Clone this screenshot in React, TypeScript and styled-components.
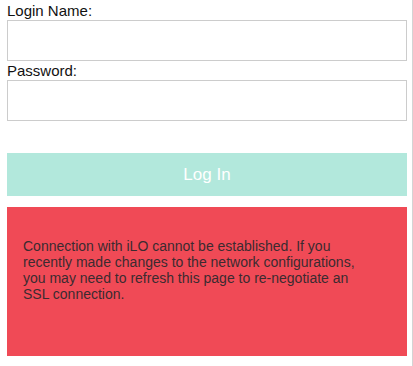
import styled, { createGlobalStyle } from 'styled-components';

const GlobalStyle = createGlobalStyle`
  html, body {
    margin: 0;
    padding: 0;
    background: #ffffff;
  }
  body {
    font-family: "Liberation Sans", Arial, sans-serif;
  }
`;

const Page = styled.div`
  width: 400px;
  min-height: 366px;
  padding: 0 5px 0 7px;
  border-right: 1px solid #d4d4d4;
`;

const Form = styled.form`
  display: flex;
  flex-direction: column;
  padding-top: 1px;
`;

const Label = styled.label`
  display: block;
  font-size: 15px;
  line-height: 19px;
  color: #111;
`;

const Input = styled.input`
  box-sizing: border-box;
  width: 400px;
  height: 41px;
  margin: 0;
  border: 1px solid #cccccc;
  background: #fff;
  outline: none;
`;

const Button = styled.button`
  margin-top: 32px;
  width: 400px;
  height: 43px;
  border: none;
  background: #b2e8dc;
  color: #ffffff;
  font-family: "Liberation Sans", Arial, sans-serif;
  font-size: 17px;
  cursor: pointer;
`;

const ErrorBox = styled.div`
  box-sizing: border-box;
  margin-top: 11px;
  width: 400px;
  height: 149px;
  padding: 31px 40px 0 16px;
  background: #f04a56;
  color: #3b2b30;
  font-size: 14px;
  line-height: 16px;
`;

export default function App() {
  return (
    <>
      <GlobalStyle />
      <Page>
        <Form onSubmit={e => e.preventDefault()}>
          <Label htmlFor="login">Login Name:</Label>
          <Input id="login" type="text" />
          <Label htmlFor="password">Password:</Label>
          <Input id="password" type="password" />
          <Button type="submit">Log In</Button>
        </Form>
        <ErrorBox>
          Connection with iLO cannot be established. If you recently made changes to the network
          configurations, you may need to refresh this page to re-negotiate an SSL connection.
        </ErrorBox>
      </Page>
    </>
  );
}
